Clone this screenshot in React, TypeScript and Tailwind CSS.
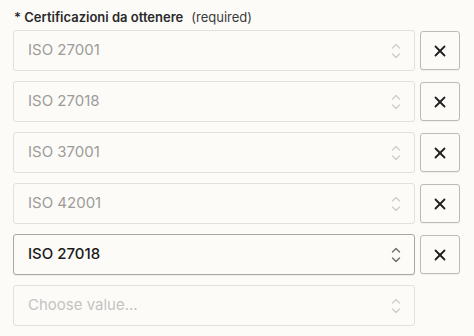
import React from "react";

const Chevrons = ({ color }: { color: string }) => (
  <svg width="10" height="18" viewBox="0 0 10 18" fill="none" stroke={color} strokeWidth="1.4" strokeLinecap="round" strokeLinejoin="round">
    <path d="M1.5 6 L5 2.5 L8.5 6" />
    <path d="M1.5 12 L5 15.5 L8.5 12" />
  </svg>
);

const XIcon = () => (
  <svg width="12" height="12" viewBox="0 0 12 12" fill="none" stroke="#1f1f1f" strokeWidth="1.8" strokeLinecap="round">
    <path d="M1.5 1.5 L10.5 10.5" />
    <path d="M10.5 1.5 L1.5 10.5" />
  </svg>
);

type Row = { label: string; kind: "disabled" | "active" | "placeholder" };

const rows: Row[] = [
  { label: "ISO 27001", kind: "disabled" },
  { label: "ISO 27018", kind: "disabled" },
  { label: "ISO 37001", kind: "disabled" },
  { label: "ISO 42001", kind: "disabled" },
  { label: "ISO 27018", kind: "active" },
  { label: "Choose value...", kind: "placeholder" },
];

export default function App() {
  return (
    <div
      className="w-[474px] h-[336px] bg-[#fcfbf8] pl-[13px] pt-[8px]"
      style={{ fontFamily: "Inter, 'Noto Sans', sans-serif" }}
    >
      <div className="flex items-center h-[18px] text-[13px] leading-[18px] mb-[4px]">
        <span className="font-semibold text-[#2a2a2a] ml-[1px]">* Certificazioni da ottenere</span>
        <span className="ml-[8px] text-[#3a3a3a]">(required)</span>
      </div>
      <div className="flex flex-col gap-[10px]">
        {rows.map((r, i) => (
          <div key={i} className="flex items-center gap-[5px]">
            <div
              className={
                "w-[402px] h-[41px] rounded-[3px] border flex items-center justify-between pl-[14px] pr-[13px] " +
                (r.kind === "active"
                  ? "border-[#a9a7a3] bg-[#fcfbf8] shadow-[0_1px_1px_rgba(0,0,0,0.06)]"
                  : "border-[#e2e0dc] bg-[#fcfbf8]")
              }
            >
              <span
                className={
                  "text-[15px] " +
                  (r.kind === "active"
                    ? "text-[#1a1a1a] font-medium"
                    : r.kind === "disabled"
                    ? "text-[#9d9c9a]"
                    : "text-[#c4c3c1]")
                }
              >
                {r.label}
              </span>
              <Chevrons color={r.kind === "active" ? "#6e6d6b" : "#cfcecb"} />
            </div>
            {r.kind !== "placeholder" && (
              <div className="w-[40px] h-[39px] rounded-[3px] border border-[#bdbbb7] bg-[#fcfbf8] flex items-center justify-center shadow-[0_1px_1px_rgba(0,0,0,0.05)]">
                <XIcon />
              </div>
            )}
          </div>
        ))}
      </div>
    </div>
  );
}
